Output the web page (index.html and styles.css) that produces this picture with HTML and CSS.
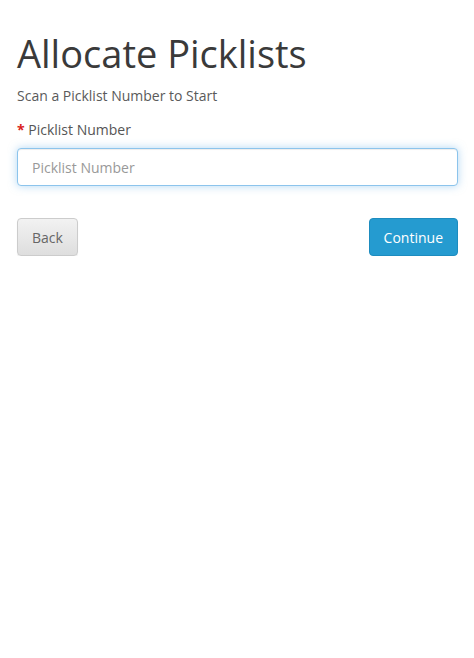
FILE: index.html
```html
<!DOCTYPE html>
<html lang="en">
<head>
  <meta charset="UTF-8">
  <meta name="viewport" content="width=device-width, initial-scale=1.0">
  <title>Allocate Picklists</title>
  <link rel="stylesheet" href="styles.css">
</head>
<body>
  <div class="container">
    <h1 class="title">Allocate Picklists</h1>
    <p class="subtitle">Scan a Picklist Number to Start</p>
    <div class="field">
      <label for="picklistNumber"><span class="required">*</span> Picklist Number</label>
      <input type="text" id="picklistNumber" placeholder="Picklist Number">
    </div>
    <div class="actions">
      <button class="back">Back</button>
      <button class="continue">Continue</button>
    </div>
  </div>
</body>
</html>
```
FILE: styles.css
```css
body {
  margin: 0;
  padding: 0;
  font-family: "Open Sans", Arial, sans-serif;
  background: #fff;
  color: #555;
}
.container {
  padding: 28px 16px 0 17px;
}
.title {
  margin: 0;
  font-size: 38px;
  font-weight: 400;
  line-height: 50px;
  color: #3a3a3a;
}
.subtitle {
  margin: 8px 0 0;
  font-size: 14px;
  line-height: 20px;
  color: #5a5a5a;
}
.field {
  margin-top: 14px;
}
.field label {
  display: block;
  font-size: 14px;
  line-height: 20px;
  margin-bottom: 8px;
  color: #555;
}
.required {
  color: #d9221c;
  font-weight: 700;
}
.field input {
  box-sizing: border-box;
  width: 100%;
  height: 38px;
  padding: 6px 14px;
  font-family: inherit;
  font-size: 14px;
  color: #555;
  border: 1px solid #8cc4ec;
  border-radius: 4px;
  box-shadow: inset 0 1px 1px rgba(0, 0, 0, 0.075), 0 0 8px rgba(102, 175, 233, 0.5);
  outline: none;
}
.field input::placeholder {
  color: #999;
}
.actions {
  display: flex;
  justify-content: space-between;
  margin-top: 32px;
}
.actions button {
  height: 38px;
  padding: 0 14px;
  font-family: inherit;
  font-size: 14px;
  border-radius: 4px;
  cursor: pointer;
}
.back {
  color: #666;
  background: linear-gradient(#f2f2f2, #dedede);
  border: 1px solid #ccc;
  box-shadow: 0 1px 1px rgba(0, 0, 0, 0.08);
}
.continue {
  color: #fff;
  background: #259bd0;
  border: 1px solid #1d8cbf;
}
```
